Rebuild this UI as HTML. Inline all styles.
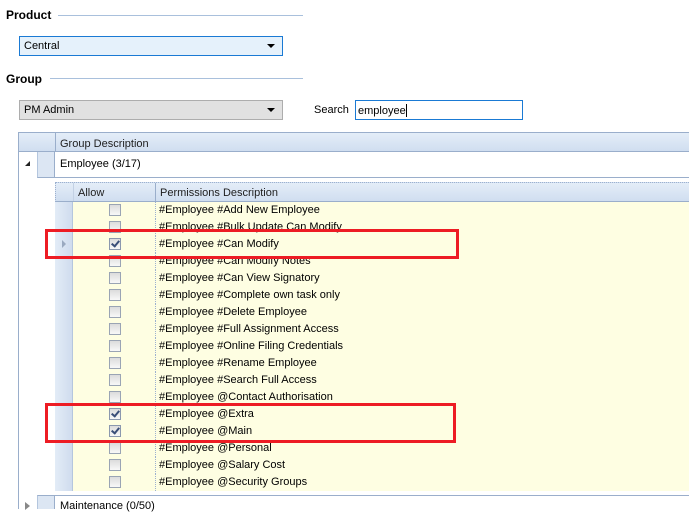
<!DOCTYPE html>
<html><head><meta charset="utf-8"><style>
*{margin:0;padding:0;box-sizing:border-box}
body{width:689px;height:509px;overflow:hidden;background:#fff;font-family:"Liberation Sans",sans-serif;font-size:11px;color:#000;position:relative}
.a{position:absolute}
.lbl{font-weight:bold;font-size:12px}
.hl{height:1px;background:#a9c0dc}
.combo{border:1px solid;height:20px;padding:3px 0 0 4px}
.arrow{position:absolute;right:7px;top:7px;width:0;height:0;border-left:4px solid transparent;border-right:4px solid transparent;border-top:4px solid #000}
.hdr{background:linear-gradient(#e4edf8,#d0def0)}
.row{position:absolute;left:55px;width:634px;height:17px;border-bottom:1px dotted #9db1cf}
.ind{position:absolute;left:0;top:0;width:18px;height:17px;background:linear-gradient(90deg,#e3ecf7,#cfdcee);border-right:1px solid #b4c6de}
.body{position:absolute;left:18px;top:0;width:616px;height:17px;background:#fefee2}
.cb{position:absolute;left:54px;top:2px;width:12px;height:12px;border:1px solid #9aa4b4;background:linear-gradient(#dcdcdc,#f8f8f8)}
.cb.on{border-color:#8b98ae}
.cb.on::after{content:"";position:absolute;left:3px;top:0px;width:3px;height:6px;border:solid #3a4e78;border-width:0 2px 2px 0;transform:rotate(40deg)}
.vd{position:absolute;left:100px;top:0;height:17px;border-left:1px dotted #9db1cf}
.tx{position:absolute;left:104px;top:2px;white-space:nowrap}
.red{position:absolute;border:3px solid #ed1c24}
</style></head><body>
<div class="a lbl" style="left:6px;top:8px">Product</div>
<div class="a hl" style="left:58px;top:15px;width:245px"></div>
<div class="a combo" style="left:19px;top:36px;width:264px;border-color:#1a7ad4;background:#e5f1fb">Central<div class="arrow"></div></div>
<div class="a lbl" style="left:6px;top:72px">Group</div>
<div class="a hl" style="left:50px;top:78px;width:253px"></div>
<div class="a combo" style="left:19px;top:100px;width:264px;border-color:#adadad;background:#e1e1e1">PM Admin<div class="arrow"></div></div>
<div class="a" style="left:314px;top:104px">Search</div>
<div class="a" style="left:355px;top:100px;width:168px;height:20px;border:1px solid #1a7ad4;padding:3px 0 0 2px">employee<span style="display:inline-block;width:1px;height:13px;background:#000;vertical-align:-3px"></span></div>

<div class="a" style="left:18px;top:132px;width:671px;height:377px;border-left:1px solid #9aaecb;border-top:1px solid #9aaecb"></div>
<div class="a hdr" style="left:19px;top:133px;width:670px;height:19px;border-bottom:1px solid #9aaecb"></div>
<div class="a" style="left:55px;top:133px;height:19px;border-left:1px solid #9aaecb"></div>
<div class="a" style="left:60px;top:138px;color:#1e1e1e">Group Description</div>
<div class="a" style="left:37px;top:152px;width:18px;height:26px;background:#dce6f3;border-right:1px solid #9aaecb;border-left:1px solid #b4c6de;border-bottom:1px solid #9aaecb"></div>
<div class="a" style="left:55px;top:177px;width:634px;height:1px;background:#9aaecb"></div>
<div class="a" style="left:25px;top:161px;width:0;height:0;border-left:5px solid transparent;border-bottom:5px solid #222"></div>
<div class="a" style="left:60px;top:158px">Employee (3/17)</div>

<div class="a hdr" style="left:55px;top:182px;width:634px;height:20px;border-top:1px dotted #9db1cf;border-left:1px dotted #9db1cf;border-bottom:1px solid #9aaecb"></div>
<div class="a" style="left:73px;top:183px;height:18px;border-left:1px solid #c3d1e4"></div>
<div class="a" style="left:155px;top:183px;height:18px;border-left:1px solid #9aaecb"></div>
<div class="a" style="left:78px;top:187px;color:#1e1e1e">Allow</div>
<div class="a" style="left:160px;top:187px;color:#1e1e1e">Permissions Description</div>

<div class="row" style="top:202px"><div class="ind"></div><div class="body"></div><div class="cb"></div><div class="vd"></div><div class="tx">#Employee #Add New Employee</div></div>
<div class="row" style="top:219px"><div class="ind"></div><div class="body"></div><div class="cb"></div><div class="vd"></div><div class="tx">#Employee #Bulk Update Can Modify</div></div>
<div class="row" style="top:236px"><div class="ind"><div style="position:absolute;left:7px;top:4px;border-top:4px solid transparent;border-bottom:4px solid transparent;border-left:4px solid #9aa9c0"></div></div><div class="body"></div><div class="cb on"></div><div class="vd"></div><div class="tx">#Employee #Can Modify</div></div>
<div class="row" style="top:253px"><div class="ind"></div><div class="body"></div><div class="cb"></div><div class="vd"></div><div class="tx">#Employee #Can Modify Notes</div></div>
<div class="row" style="top:270px"><div class="ind"></div><div class="body"></div><div class="cb"></div><div class="vd"></div><div class="tx">#Employee #Can View Signatory</div></div>
<div class="row" style="top:287px"><div class="ind"></div><div class="body"></div><div class="cb"></div><div class="vd"></div><div class="tx">#Employee #Complete own task only</div></div>
<div class="row" style="top:304px"><div class="ind"></div><div class="body"></div><div class="cb"></div><div class="vd"></div><div class="tx">#Employee #Delete Employee</div></div>
<div class="row" style="top:321px"><div class="ind"></div><div class="body"></div><div class="cb"></div><div class="vd"></div><div class="tx">#Employee #Full Assignment Access</div></div>
<div class="row" style="top:338px"><div class="ind"></div><div class="body"></div><div class="cb"></div><div class="vd"></div><div class="tx">#Employee #Online Filing Credentials</div></div>
<div class="row" style="top:355px"><div class="ind"></div><div class="body"></div><div class="cb"></div><div class="vd"></div><div class="tx">#Employee #Rename Employee</div></div>
<div class="row" style="top:372px"><div class="ind"></div><div class="body"></div><div class="cb"></div><div class="vd"></div><div class="tx">#Employee #Search Full Access</div></div>
<div class="row" style="top:389px"><div class="ind"></div><div class="body"></div><div class="cb"></div><div class="vd"></div><div class="tx">#Employee @Contact Authorisation</div></div>
<div class="row" style="top:406px"><div class="ind"></div><div class="body"></div><div class="cb on"></div><div class="vd"></div><div class="tx">#Employee @Extra</div></div>
<div class="row" style="top:423px"><div class="ind"></div><div class="body"></div><div class="cb on"></div><div class="vd"></div><div class="tx">#Employee @Main</div></div>
<div class="row" style="top:440px"><div class="ind"></div><div class="body"></div><div class="cb"></div><div class="vd"></div><div class="tx">#Employee @Personal</div></div>
<div class="row" style="top:457px"><div class="ind"></div><div class="body"></div><div class="cb"></div><div class="vd"></div><div class="tx">#Employee @Salary Cost</div></div>
<div class="row" style="top:474px"><div class="ind"></div><div class="body"></div><div class="cb"></div><div class="vd"></div><div class="tx">#Employee @Security Groups</div></div>

<div class="a" style="left:37px;top:495px;width:18px;height:14px;background:#dce6f3;border-right:1px solid #9aaecb;border-left:1px solid #b4c6de;border-top:1px solid #9aaecb"></div>
<div class="a" style="left:55px;top:495px;width:634px;height:1px;background:#9aaecb"></div>
<div class="a" style="left:25px;top:502px;border-top:4px solid transparent;border-bottom:4px solid transparent;border-left:5px solid #888"></div>
<div class="a" style="left:60px;top:500px">Maintenance (0/50)</div>

<div class="red" style="left:45px;top:229px;width:414px;height:30px"></div>
<div class="red" style="left:45px;top:403px;width:411px;height:40px"></div>
</body></html>
